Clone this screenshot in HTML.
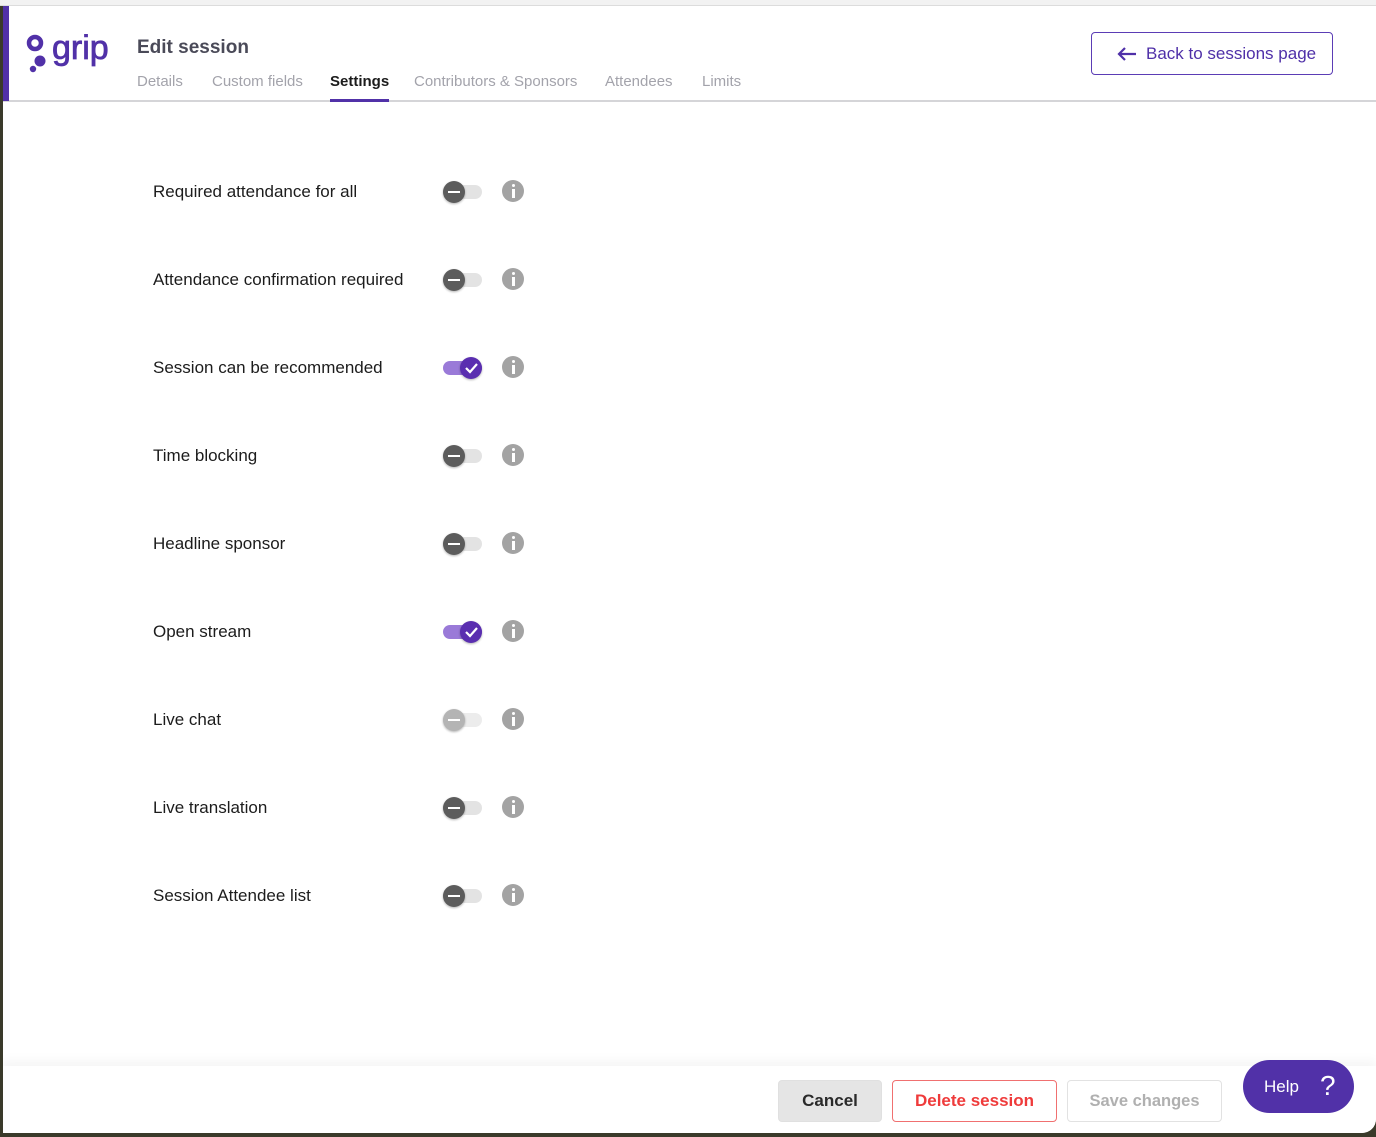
<!DOCTYPE html>
<html><head><style>
*{margin:0;padding:0;box-sizing:border-box}
body{width:1376px;height:1137px;overflow:hidden;background:#3a3a2a;font-family:"Liberation Sans",sans-serif;position:relative}
.top{position:absolute;left:0;top:0;width:1376px;height:6px;background:#f2f2f2;border-bottom:1px solid #dcdcdc}
.page{position:absolute;left:3px;top:6px;width:1373px;height:1127px;background:#fff;border-bottom-right-radius:14px;overflow:hidden}
.bar{position:absolute;left:0;top:0;width:6px;height:95px;background:#5131a8}
.hdr{position:absolute;left:0;top:0;width:100%;height:96px;border-bottom:2px solid #d5d5d8}
.title{position:absolute;left:134px;top:31px;font-size:19px;font-weight:bold;color:#4a4a58}
.tabs{position:absolute;left:134px;top:67px;font-size:15px;color:#a3a3ab}
.tabs span{position:absolute;white-space:nowrap}
.back{position:absolute;left:1088px;top:26px;width:242px;height:43px;border:1px solid #5b3db5;border-radius:4px;color:#4f30a8;font-size:17px;line-height:41px;padding-left:54px}
.row{position:absolute;left:150px;font-size:17px;color:#1c1c1c}
.trk{position:absolute;left:440px;width:39px;height:14px;border-radius:7px;background:#e3e3e3}
.knob{position:absolute;top:-4px;width:22px;height:22px;border-radius:50%;background:#5c5c5c;box-shadow:0 1px 2px rgba(0,0,0,.3)}
.knob::after{content:"";position:absolute;left:5px;top:10px;width:12px;height:2px;background:#fff}
.on{background:#9a7ad8}
.on .knob{left:17px;background:#5a2eb0}
.on .knob::after{display:none}
.dis .knob{background:#b4b4b4}
.info{position:absolute;left:499px;width:22px;height:22px;border-radius:50%;background:#a3a3a3}
.info::before{content:"";position:absolute;left:9.5px;top:4px;width:3px;height:3px;border-radius:50%;background:#fff}
.info::after{content:"";position:absolute;left:9.5px;top:9px;width:3px;height:9px;background:#fff}
.foot{position:absolute;left:0;top:1060px;width:100%;height:67px;background:#fff;box-shadow:0 -6px 10px rgba(0,0,0,.04)}
.btn{position:absolute;top:1074px;height:42px;border-radius:4px;font-size:17px;font-weight:bold;text-align:center;line-height:40px}
</style></head><body>
<div class="top"></div>
<div class="page">
<div class="hdr"></div><div class="bar"></div>
<svg style="position:absolute;left:20px;top:28px" width="95" height="40" viewBox="0 0 95 40">
<circle cx="12" cy="9" r="6" fill="none" stroke="#5131a8" stroke-width="4.5"/>
<circle cx="17" cy="27" r="5.5" fill="#5131a8"/><circle cx="10" cy="35" r="3.2" fill="#5131a8"/>
<text x="29" y="25" font-family="Liberation Sans" font-size="34" fill="#5131a8" stroke="#5131a8" stroke-width="0.8">grip</text></svg>
<div class="title">Edit session</div>
<div class="tabs"><span style="left:0">Details</span><span style="left:75px">Custom fields</span><span style="left:193px;color:#1c1c1c;font-weight:bold">Settings</span><span style="left:277px">Contributors &amp; Sponsors</span><span style="left:468px">Attendees</span><span style="left:565px">Limits</span></div>
<div style="position:absolute;left:327px;top:93px;width:59px;height:3px;background:#5131a8"></div>
<div class="back"><svg style="position:absolute;left:25px;top:13px" width="20" height="16" viewBox="0 0 20 16"><path d="M19 8H2M8 2L2 8l6 6" fill="none" stroke="#4f30a8" stroke-width="2.2"/></svg>Back to sessions page</div>

<div class="row" style="top:176px">Required attendance for all</div><div class="trk" style="top:179px"><div class="knob" style="left:0"></div></div><div class="info" style="top:174px"></div>
<div class="row" style="top:264px">Attendance confirmation required</div><div class="trk" style="top:267px"><div class="knob" style="left:0"></div></div><div class="info" style="top:262px"></div>
<div class="row" style="top:352px">Session can be recommended</div><div class="trk on" style="top:355px"><div class="knob"><svg width="22" height="22"><path d="M6 11l4 4 7-8" fill="none" stroke="#fff" stroke-width="2.2"/></svg></div></div><div class="info" style="top:350px"></div>
<div class="row" style="top:440px">Time blocking</div><div class="trk" style="top:443px"><div class="knob" style="left:0"></div></div><div class="info" style="top:438px"></div>
<div class="row" style="top:528px">Headline sponsor</div><div class="trk" style="top:531px"><div class="knob" style="left:0"></div></div><div class="info" style="top:526px"></div>
<div class="row" style="top:616px">Open stream</div><div class="trk on" style="top:619px"><div class="knob"><svg width="22" height="22"><path d="M6 11l4 4 7-8" fill="none" stroke="#fff" stroke-width="2.2"/></svg></div></div><div class="info" style="top:614px"></div>
<div class="row" style="top:704px">Live chat</div><div class="trk dis" style="top:707px;background:#ececec"><div class="knob" style="left:0"></div></div><div class="info" style="top:702px"></div>
<div class="row" style="top:792px">Live translation</div><div class="trk" style="top:795px"><div class="knob" style="left:0"></div></div><div class="info" style="top:790px"></div>
<div class="row" style="top:880px">Session Attendee list</div><div class="trk" style="top:883px"><div class="knob" style="left:0"></div></div><div class="info" style="top:878px"></div>

<div class="foot"></div>
<div class="btn" style="left:775px;width:104px;background:#e5e5e5;color:#2a2a2a;border:1px solid #e0e0e0">Cancel</div>
<div class="btn" style="left:889px;width:165px;border:1px solid #f07070;color:#ef3b3b">Delete session</div>
<div class="btn" style="left:1064px;width:155px;border:1px solid #e2e2e2;color:#b0b0b0;font-size:16.5px">Save changes</div>
<div style="position:absolute;left:1240px;top:1054px;width:111px;height:53px;border-radius:27px;background:#5131a8;color:#fff;font-size:17px;line-height:53px;padding-left:21px">Help<span style="position:absolute;left:77px;top:-1px;font-size:28px">?</span></div>
</div>
</body></html>
